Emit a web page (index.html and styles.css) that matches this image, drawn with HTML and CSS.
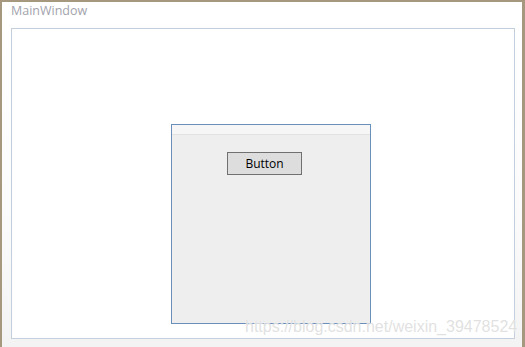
FILE: index.html
```html
<!DOCTYPE html>
<html>
<head>
<meta charset="utf-8">
<link rel="stylesheet" href="styles.css">
</head>
<body>
<div class="window">
  <div class="title">MainWindow</div>
  <div class="client">
    <div class="panel">
      <div class="panel-head"></div>
      <div class="panel-body">
        <div class="button">Button</div>
      </div>
    </div>
  </div>
  <div class="watermark">https://blog.csdn.net/weixin_39478524</div>
</div>
</body>
</html>
```
FILE: styles.css
```css
html, body {
  margin: 0;
  padding: 0;
  width: 525px;
  height: 347px;
  overflow: hidden;
  background: #f3f3f3;
}
.window {
  position: relative;
  box-sizing: border-box;
  width: 525px;
  height: 347px;
  border-top: 2px solid #a6977f;
  border-left: 2px solid #a6977f;
  border-right: 3px solid #a6977f;
  background: linear-gradient(to bottom, #ffffff 0%, #fbfbfb 60%, #f3f3f3 100%);
  font-family: "Open Sans", "Liberation Sans", sans-serif;
}
.title {
  height: 26px;
  padding-left: 9px;
  font-size: 12.5px;
  line-height: 17px;
  color: #a3a3ad;
}
.client {
  box-sizing: border-box;
  margin-left: 9px;
  width: 504px;
  height: 311px;
  border: 1px solid #c3cfdd;
  background: #ffffff;
  padding-top: 95px;
  padding-left: 159px;
}
.panel {
  box-sizing: border-box;
  width: 200px;
  height: 200px;
  border: 1px solid #6b8fbb;
  background: #eeeeee;
  display: flex;
  flex-direction: column;
}
.panel-head {
  height: 9px;
  background: #f6f6f6;
  border-bottom: 1px solid #e2e2e2;
}
.panel-body {
  flex: 1;
  padding-top: 17px;
  padding-left: 55px;
}
.button {
  box-sizing: border-box;
  width: 75px;
  height: 23px;
  border: 1px solid #707070;
  background: #dddddd;
  color: #000000;
  font-size: 12px;
  line-height: 21px;
  text-align: center;
}
.watermark {
  position: absolute;
  left: 243px;
  top: 316px;
  font-family: "Liberation Sans", Arial, sans-serif;
  font-size: 16px;
  color: rgba(215, 215, 215, 0.75);
  text-shadow: 0 0 1px #ffffff;
  white-space: nowrap;
}
```
